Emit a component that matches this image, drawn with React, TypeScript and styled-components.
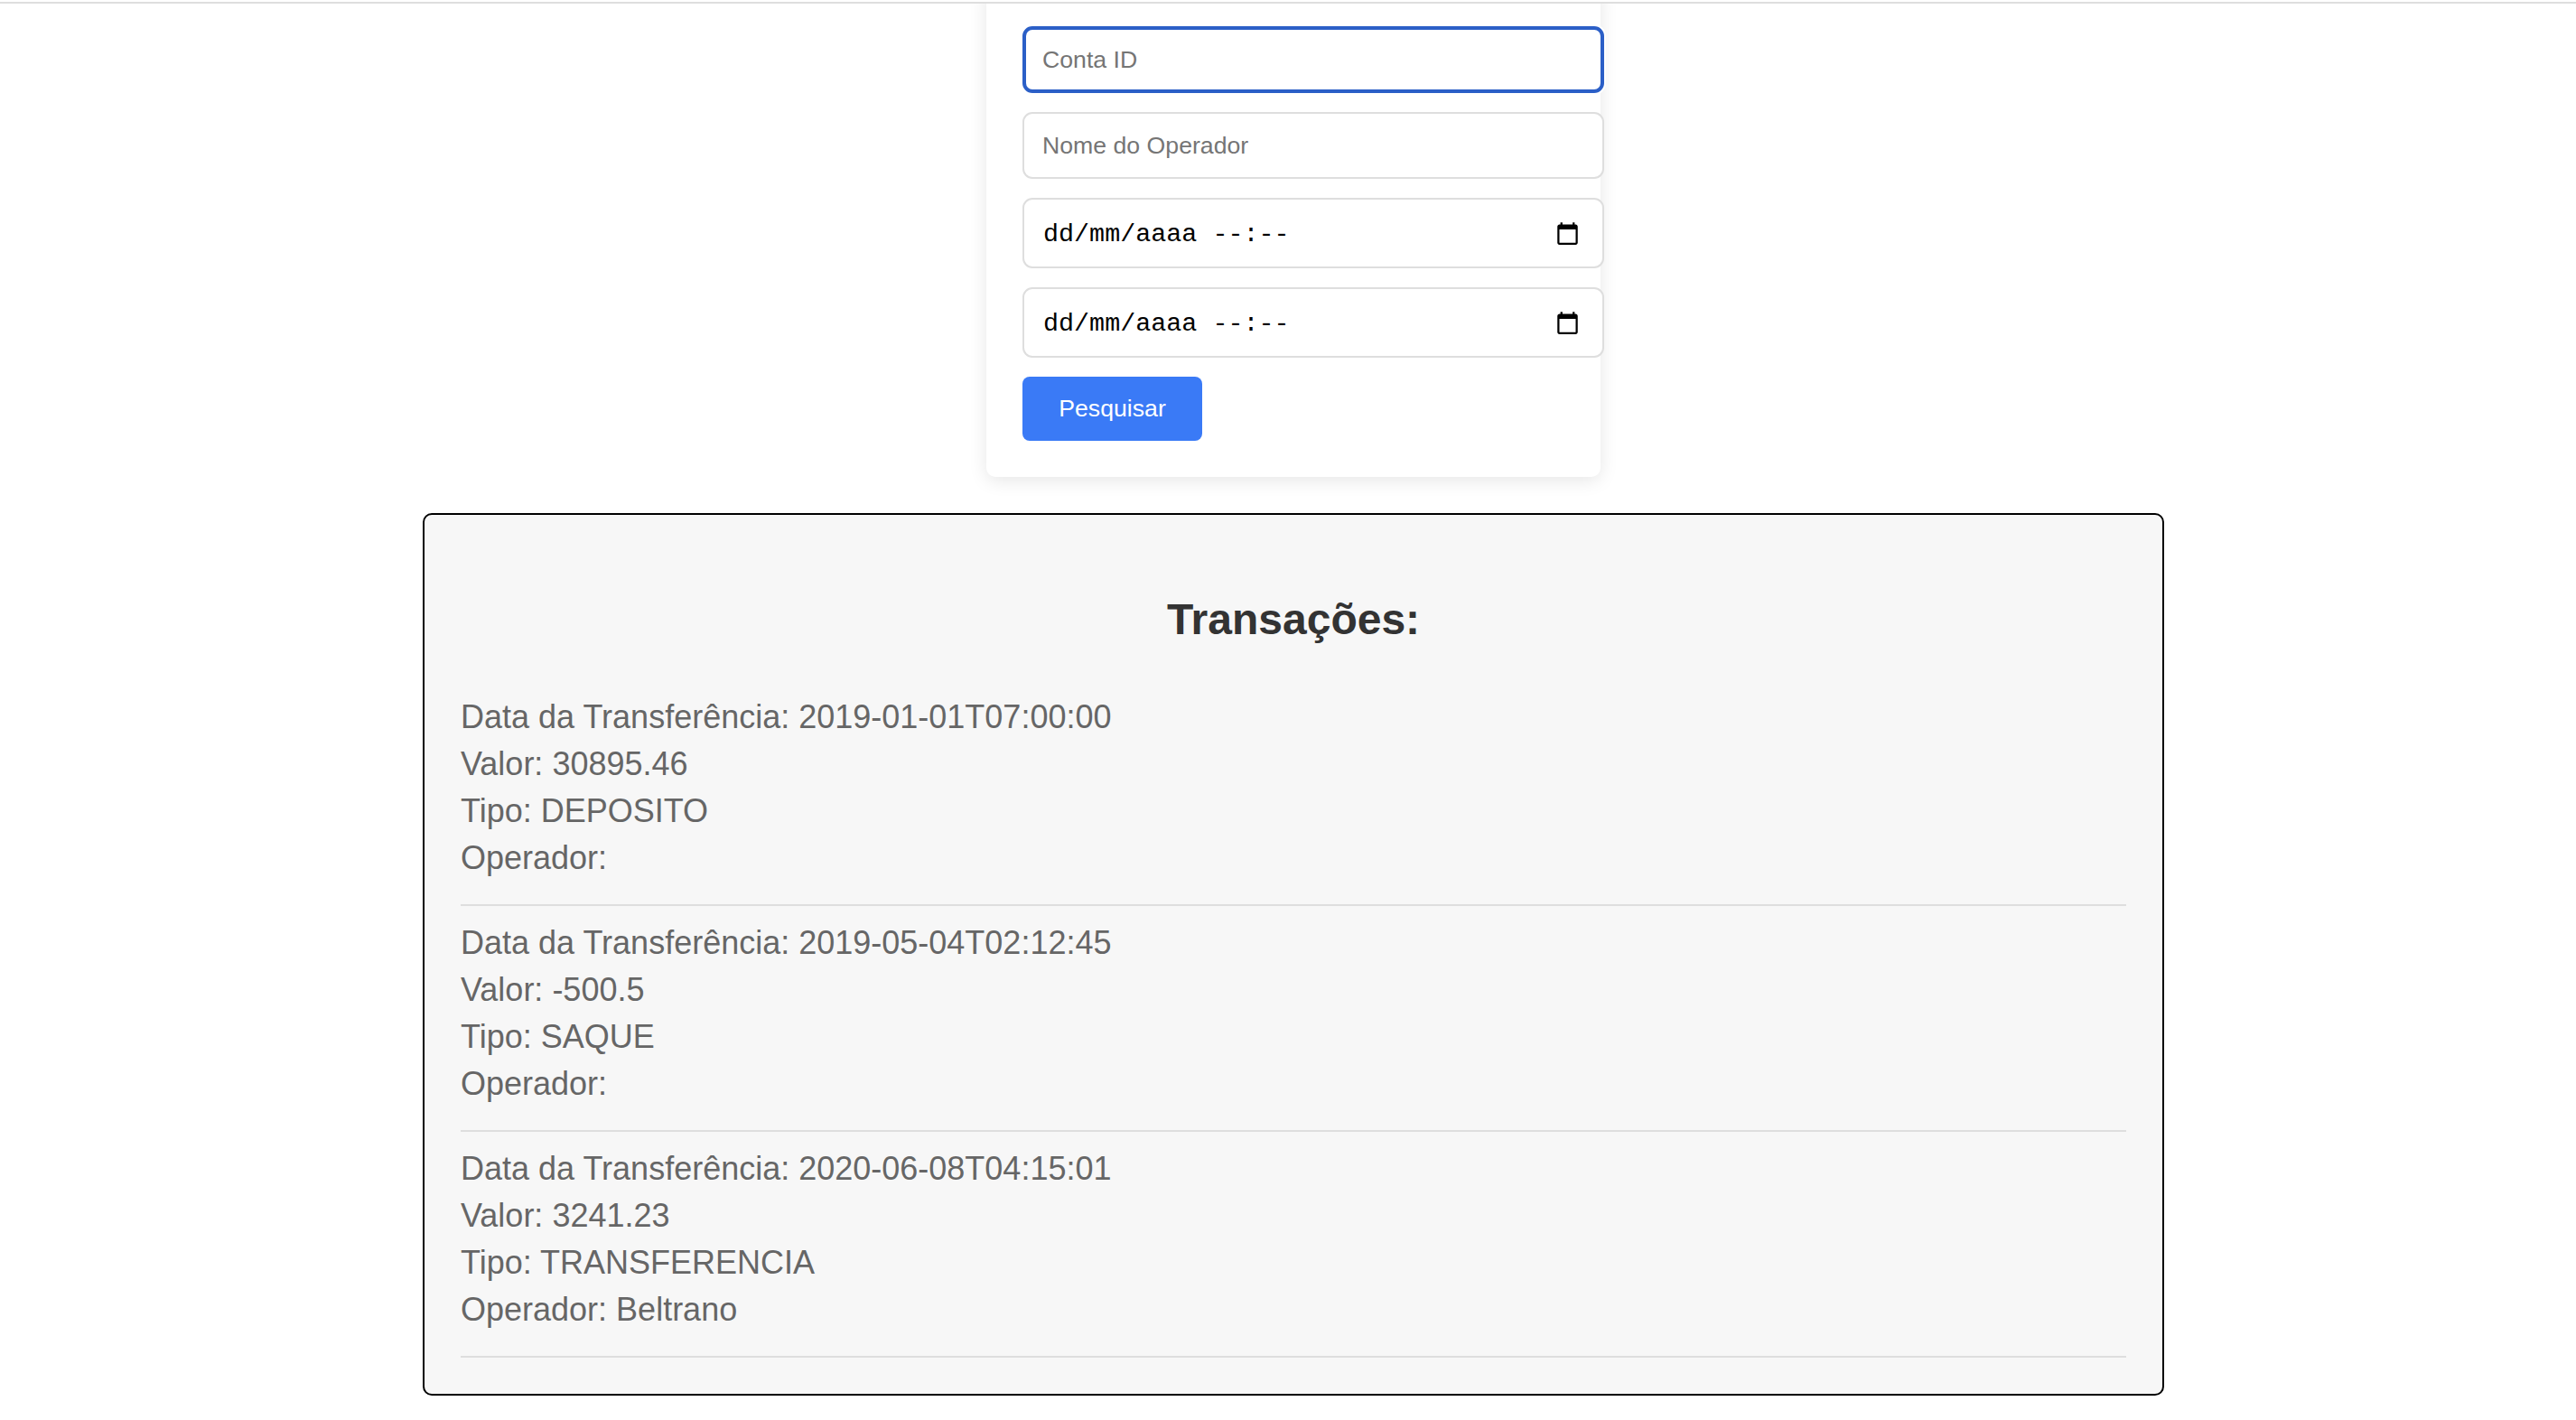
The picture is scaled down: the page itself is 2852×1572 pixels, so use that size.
import styled, { createGlobalStyle } from "styled-components";

const transactions = [
  { date: "2019-01-01T07:00:00", value: "30895.46", type: "DEPOSITO", operator: "" },
  { date: "2019-05-04T02:12:45", value: "-500.5", type: "SAQUE", operator: "" },
  { date: "2020-06-08T04:15:01", value: "3241.23", type: "TRANSFERENCIA", operator: "Beltrano" },
];

function CalendarIcon() {
  return (
    <CalendarSvg viewBox="0 0 24 24" aria-hidden="true">
      <path d="M20 3h-1V1h-2v2H7V1H5v2H4c-1.1 0-2 .9-2 2v16c0 1.1.9 2 2 2h16c1.1 0 2-.9 2-2V5c0-1.1-.9-2-2-2zm0 18H4V8h16v13z" />
    </CalendarSvg>
  );
}

function DateField() {
  return (
    <DateBox>
      <DateText>dd/mm/aaaa --:--</DateText>
      <CalendarIcon />
    </DateBox>
  );
}

export default function App() {
  return (
    <>
      <GlobalStyle />
      <Page>
        <TopLine />
        <Content>
          <SearchCard>
            <TextInput $focused placeholder="Conta ID" />
            <TextInput placeholder="Nome do Operador" />
            <DateField />
            <DateField />
            <SearchButton>Pesquisar</SearchButton>
          </SearchCard>

          <ResultsPanel>
            <ResultsTitle>Transações:</ResultsTitle>
            {transactions.map((t) => (
              <Transaction key={t.date}>
                <Line>Data da Transferência: {t.date}</Line>
                <Line>Valor: {t.value}</Line>
                <Line>Tipo: {t.type}</Line>
                <Line>Operador: {t.operator}</Line>
              </Transaction>
            ))}
          </ResultsPanel>
        </Content>
      </Page>
    </>
  );
}

const GlobalStyle = createGlobalStyle`
  * {
    box-sizing: border-box;
  }

  body {
    margin: 0;
    background: #fff;
    font-family: "Liberation Sans", Arial, sans-serif;
  }
`;

const Page = styled.div`
  height: 1572px;
  overflow: hidden;
  padding-top: 2px;
  background: #fff;
`;

const TopLine = styled.div`
  height: 2px;
  background: #dedede;
`;

const Content = styled.main`
  height: 1568px;
  overflow: hidden;
  display: flex;
  flex-direction: column;
  align-items: center;
  padding-left: 12px;
`;

const SearchCard = styled.form`
  width: 680px;
  margin-top: -20px;
  padding: 45px 40px 40px;
  display: flex;
  flex-direction: column;
  align-items: flex-start;
  gap: 21px;
  background: #fff;
  border-radius: 10px;
  box-shadow: 0 4px 20px rgba(0, 0, 0, 0.1);
`;

const TextInput = styled.input<{ $focused?: boolean }>`
  width: 644px;
  height: 74px;
  flex: none;
  padding: 0 ${(p) => (p.$focused ? "18px" : "20px")};
  background: #fff;
  border: ${(p) => (p.$focused ? "4px solid #2b5fc7" : "2px solid #dedede")};
  border-radius: 11px;
  box-shadow: ${(p) => (p.$focused ? "0 0 0 2px #fff" : "none")};
  outline: none;
  font-family: "Liberation Sans", Arial, sans-serif;
  font-size: 26.67px;
  color: #333;

  &::placeholder {
    color: #757575;
    opacity: 1;
  }
`;

const DateBox = styled.div`
  width: 644px;
  height: 78px;
  flex: none;
  display: flex;
  align-items: center;
  justify-content: space-between;
  padding: 0 25px 0 21px;
  background: #fff;
  border: 2px solid #dedede;
  border-radius: 11px;
`;

const DateText = styled.span`
  padding-top: 3px;
  font-family: "Liberation Mono", "Courier New", monospace;
  font-size: 28.4px;
  color: #000;
  white-space: pre;
`;

const CalendarSvg = styled.svg`
  width: 27px;
  height: 27px;
  fill: #000;
`;

const SearchButton = styled.button`
  width: 199px;
  height: 71px;
  padding: 0;
  background: #3a7af6;
  color: #fff;
  border: none;
  border-radius: 8px;
  font-family: "Liberation Sans", Arial, sans-serif;
  font-size: 26.67px;
`;

const ResultsPanel = styled.section`
  width: 1928px;
  margin-top: 40px;
  padding: 88px 40px 40px;
  background: #f7f7f7;
  border: 2px solid #000;
  border-radius: 10px;
`;

const ResultsTitle = styled.h2`
  margin: 0 0 54px;
  text-align: center;
  font-size: 48px;
  line-height: 56px;
  font-weight: 700;
  color: #333;
`;

const Transaction = styled.article`
  padding-bottom: 25px;
  margin-bottom: 15px;
  border-bottom: 2px solid #dedede;

  &:last-child {
    margin-bottom: 0;
  }
`;

const Line = styled.div`
  font-size: 36px;
  line-height: 52px;
  color: #666;
`;
